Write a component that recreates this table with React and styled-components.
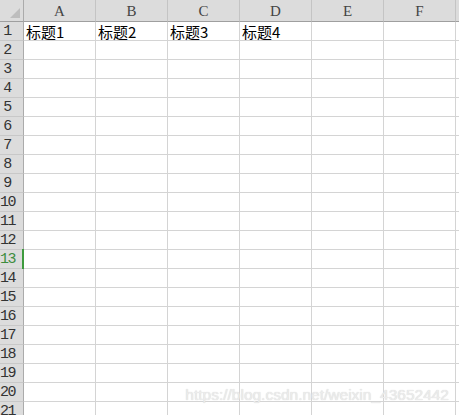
import React from "react";
import styled, { createGlobalStyle } from "styled-components";

const GlobalStyle = createGlobalStyle`
  html, body {
    margin: 0;
    padding: 0;
    background: #ffffff;
    overflow: hidden;
  }
`;

const columns = ["A", "B", "C", "D", "E", "F", ""];
const rowCount = 21;
const data = { 1: ["标题1", "标题2", "标题3", "标题4"] };
const activeRow = 13;

const Sheet = styled.div`
  position: relative;
  width: 459px;
  height: 415px;
  overflow: hidden;
  display: grid;
  grid-template-columns: 24px repeat(6, 72px) 40px;
  grid-auto-rows: 19px;
  grid-template-rows: 22px;
  font-family: "Noto Sans CJK SC", "DejaVu Sans Mono", monospace;
`;

const Corner = styled.div`
  position: relative;
  background: #dcdcdc;
  border-right: 1px solid #ababab;
  border-bottom: 1px solid #9f9f9f;
  box-sizing: border-box;

  &::after {
    content: "";
    position: absolute;
    right: 3px;
    bottom: 3px;
    width: 0;
    height: 0;
    border-left: 10px solid transparent;
    border-bottom: 10px solid #bdbdbd;
  }
`;

const ColHead = styled.div`
  background: #dcdcdc;
  border-right: 1px solid #c4c4c4;
  border-bottom: 1px solid #9f9f9f;
  box-sizing: border-box;
  display: flex;
  align-items: flex-end;
  justify-content: center;
  padding-bottom: 1px;
  font-family: "Liberation Serif", "DejaVu Serif", serif;
  font-size: 15px;
  line-height: 18px;
  color: #444444;
`;

const RowHead = styled.div`
  position: relative;
  background: #dcdcdc;
  border-right: 1px solid #ababab;
  border-bottom: 1px solid #c8c8c8;
  box-sizing: border-box;
  padding-right: 9px;
  text-align: center;
  font-family: "Liberation Mono", "DejaVu Sans Mono", monospace;
  font-size: 15px;
  line-height: 19px;
  letter-spacing: -1.5px;
  color: ${(p) => (p.$active ? "#3e8d3e" : "#333333")};

  ${(p) =>
    p.$active &&
    `
    &::after {
      content: "";
      position: absolute;
      right: -1px;
      top: -1px;
      bottom: -1px;
      width: 2px;
      background: #3e9b3e;
    }
  `}
`;

const Cell = styled.div`
  border-right: 1px solid #d4d4d4;
  border-bottom: 1px solid #d4d4d4;
  box-sizing: border-box;
  padding-left: 2px;
  font-size: 15px;
  line-height: 17px;
  color: #000000;
  white-space: nowrap;
  overflow: visible;
  display: flex;
  align-items: flex-end;
`;

const Watermark = styled.div`
  position: absolute;
  right: 10px;
  top: 385px;
  font-family: "Liberation Sans", Arial, sans-serif;
  font-size: 15.5px;
  line-height: 20px;
  color: #ececec;
  text-shadow: 0 0 1px #cfcfcf;
  white-space: nowrap;
  pointer-events: none;
`;

export default function App() {
  const rows = Array.from({ length: rowCount }, (_, i) => i + 1);
  return (
    <>
      <GlobalStyle />
      <Sheet>
        <Corner />
        {columns.map((c, i) => (
          <ColHead key={i}>{c}</ColHead>
        ))}
        {rows.map((r) => (
          <React.Fragment key={r}>
            <RowHead $active={r === activeRow}>{r}</RowHead>
            {columns.map((c, i) => (
              <Cell key={i}>{data[r] ? data[r][i] : ""}</Cell>
            ))}
          </React.Fragment>
        ))}
        <Watermark>https://blog.csdn.net/weixin_43652442</Watermark>
      </Sheet>
    </>
  );
}
